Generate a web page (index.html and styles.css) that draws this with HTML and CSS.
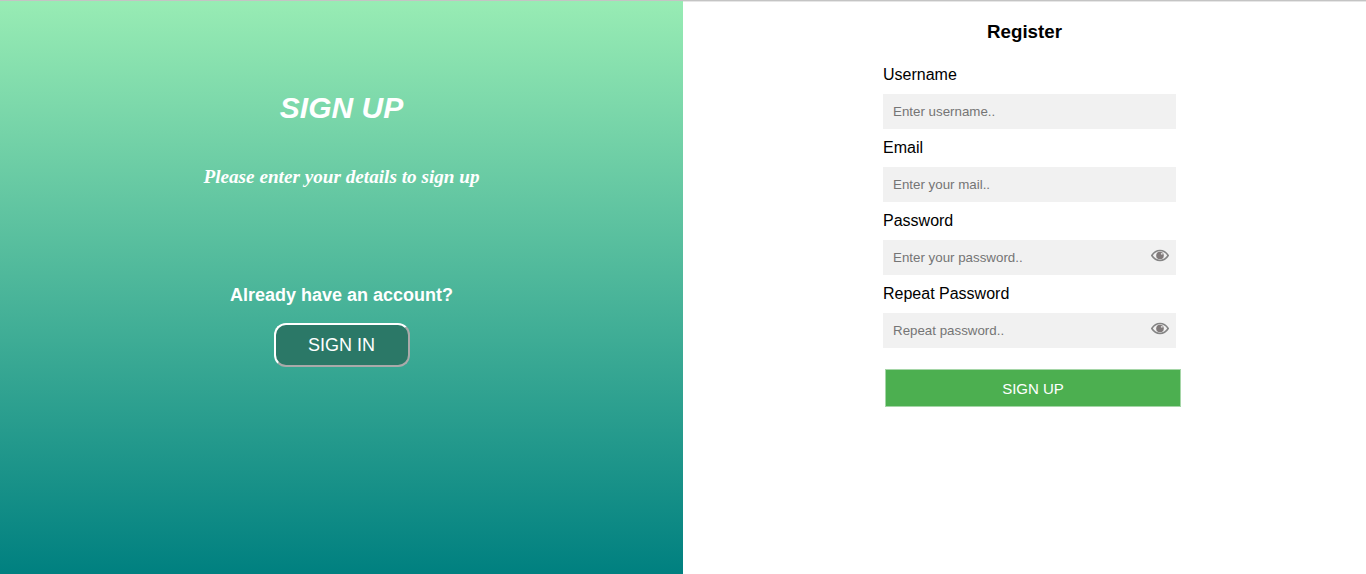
FILE: index.html

```html
<!DOCTYPE html>
<html lang="en">
<head>
  <meta charset="UTF-8" />
  <meta name="viewport" content="width=device-width, initial-scale=1.0"/>
  <title>Register</title>
  <link rel="stylesheet" href="styles.css">
</head>
<body>

  <div class="topline"></div>

  <div class="page">
    <div class="left">
      <h1>SIGN UP</h1>
      <p class="subtitle">Please enter your details to sign up</p>
      <p class="already">Already have an account?</p>
      <button type="button" class="signin">SIGN IN</button>
    </div>

    <div class="right">
      <form class="register">
        <h2>Register</h2>

        <label>Username</label>
        <div class="field"><input type="text" placeholder="Enter username.." /></div>

        <label>Email</label>
        <div class="field"><input type="text" placeholder="Enter your mail.." /></div>

        <label>Password</label>
        <div class="field">
          <input type="password" placeholder="Enter your password.." />
          <svg class="eye" viewBox="0 0 18 12" width="18" height="13">
            <path d="M0.8 6C3 2.600 5.800 1 9 1s6 1.600 8.200 5C15 9.400 12.200 11 9 11S3 9.400 0.8 6z" fill="none" stroke="#858585" stroke-width="1.600"/>
            <circle cx="9" cy="6" r="3.800" fill="#807a7a"/>
            <circle cx="10.800" cy="4.200" r="1" fill="#d8d8d8"/>
          </svg>
        </div>

        <label>Repeat Password</label>
        <div class="field">
          <input type="password" placeholder="Repeat password.." />
          <svg class="eye" viewBox="0 0 18 12" width="18" height="13">
            <path d="M0.8 6C3 2.600 5.800 1 9 1s6 1.600 8.200 5C15 9.400 12.200 11 9 11S3 9.400 0.8 6z" fill="none" stroke="#858585" stroke-width="1.600"/>
            <circle cx="9" cy="6" r="3.800" fill="#807a7a"/>
            <circle cx="10.800" cy="4.200" r="1" fill="#d8d8d8"/>
          </svg>
        </div>

        <button type="button" class="signup">SIGN UP</button>
      </form>
    </div>
  </div>

</body>
</html>
```

FILE: styles.css

```css
body {
  font-family: "Liberation Sans", Arial, sans-serif;
  margin: 0;
  background: white;
}
.topline {
  height: 1px;
  background: #c4c4c4;
}
.page {
  display: flex;
  height: 573px;
}
.left {
  width: 683px;
  display: flex;
  flex-direction: column;
  align-items: center;
  background: linear-gradient(#98ecb4, #008080);
  color: white;
}
.left h1 {
  margin: 89px 0 0;
  font-size: 30px;
  line-height: 35px;
  font-style: italic;
  font-weight: bold;
}
.subtitle {
  margin: 40px 0 0;
  font-family: "Liberation Serif", serif;
  font-size: 19.200px;
  line-height: 23px;
  font-style: italic;
  font-weight: bold;
}
.already {
  margin: 97px 0 0;
  font-size: 18px;
  line-height: 21px;
  font-weight: bold;
}
.signin {
  margin-top: 17px;
  width: 136px;
  height: 44px;
  font-family: inherit;
  font-size: 18px;
  color: white;
  background: #2b7867;
  border: 2px solid;
  border-color: white #aaa #aaa white;
  border-radius: 12px;
}
.right {
  flex: 1;
  padding-left: 200px;
  border-top: 1px solid #e6e6e6;
}
.register {
  width: 293px;
  display: flex;
  flex-direction: column;
}
.register h2 {
  margin: 19px 10px 24px 0;
  font-size: 18.720px;
  line-height: 21px;
  text-align: center;
}
.register label {
  font-size: 16px;
  line-height: 18px;
  margin-bottom: 10px;
}
.field {
  position: relative;
  margin-bottom: 10px;
}
.field input {
  display: block;
  width: 100%;
  height: 35px;
  box-sizing: border-box;
  padding: 0 10px;
  border: none;
  background: #f1f1f1;
  font-family: inherit;
  font-size: 13.333px;
}
.eye {
  position: absolute;
  right: 7px;
  top: 9px;
}
.signup {
  margin: 11px 0 0 2px;
  width: 296px;
  height: 38px;
  border: 1px solid #a5d6a7;
  background: #4caf50;
  color: white;
  font-family: inherit;
  font-size: 15px;
}
```
